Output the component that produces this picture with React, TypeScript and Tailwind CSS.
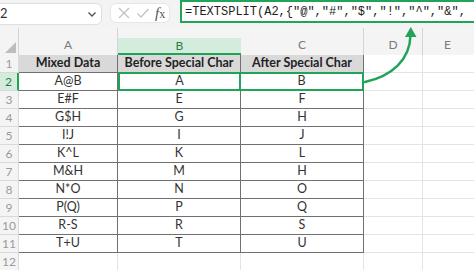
import React from "react";

const rows: [string, string, string][] = [
  ["A@B", "A", "B"],
  ["E#F", "E", "F"],
  ["G$H", "G", "H"],
  ["I!J", "I", "J"],
  ["K^L", "K", "L"],
  ["M&H", "M", "H"],
  ["N*O", "N", "O"],
  ["P(Q)", "P", "Q"],
  ["R-S", "R", "S"],
  ["T+U", "T", "U"],
];

const G = "#21a35a";
const FORMULA = '=TEXTSPLIT(A2,{"@","#","$","!","^","&",';

export default function App() {
  return (
    <div
      className="relative w-[474px] h-[270px] overflow-hidden bg-white"
      style={{ fontFamily: "Lato, 'Liberation Sans', sans-serif" }}
    >
      {/* toolbar */}
      <div className="flex h-[28px] items-start bg-[#f3f3f3]">
        <div className="ml-[-6px] mt-[3px] flex h-[22px] w-[108px] items-center justify-between rounded-md border border-[#dedede] bg-white pl-[5px] pr-[4px] text-[13px] text-[#333]">
          <span>2</span>
          <svg width="10" height="8" viewBox="0 0 10 8">
            <path d="M1.5 2.5 L5 6 L8.5 2.5" fill="none" stroke="#555" strokeWidth="1.4" />
          </svg>
        </div>
        <div className="ml-[8px] mt-[3px] flex h-[20px] w-[60px] items-center rounded-md border border-[#e6e6e6] bg-white pl-[6px]">
          <svg width="14" height="14" viewBox="0 0 14 14">
            <path d="M2 2 L12 12 M12 2 L2 12" stroke="#c4c4c4" strokeWidth="1.4" />
          </svg>
          <svg className="ml-[5px]" width="14" height="14" viewBox="0 0 14 14">
            <path d="M1.5 7.5 L5 11 L12.5 3" fill="none" stroke="#c4c4c4" strokeWidth="1.4" />
          </svg>
          <span
            className="ml-[5px] text-[15px] leading-none text-[#555]"
            style={{ fontFamily: "'Liberation Serif', serif" }}
          >
            <span className="italic">f</span>
            <span className="text-[12px]">x</span>
          </span>
        </div>
        <div
          className="ml-[10px] mr-[-10px] flex h-[23px] flex-1 items-center overflow-hidden whitespace-nowrap border-2 border-[#21a35a] bg-white pl-[3px] text-[12px] text-[#222]"
          style={{ fontFamily: "'Liberation Mono', monospace" }}
        >
          {FORMULA}
        </div>
      </div>

      {/* column headers */}
      <div className="grid h-[27px] grid-cols-[19px_99px_123px_123px_59px_1fr] bg-[#f4f4f4] text-[12px] text-[#7a7a7a]">
        <div className="relative border-r border-[#d4d4d4]">
          <svg className="absolute bottom-[2px] right-[2px]" width="11" height="11" viewBox="0 0 11 11">
            <path d="M11 0 L11 11 L0 11 Z" fill="#bdbdbd" />
          </svg>
        </div>
        <div className="flex items-end justify-center border-r border-[#d4d4d4] pb-[1px]">A</div>
        <div className="flex flex-col justify-end">
          <div className="flex h-[17px] items-center justify-center border-b-2 border-[#21a35a] bg-[#d4ecdc] text-[#2a7a4d]">
            B
          </div>
        </div>
        <div className="flex items-end justify-center border-r border-[#d4d4d4] pb-[1px]">C</div>
        <div className="flex items-end justify-center border-r border-[#d4d4d4] pb-[1px]">D</div>
        <div className="flex items-end justify-center pb-[1px] pr-[2px]">E</div>
      </div>

      {/* data grid */}
      <div className="grid grid-cols-[19px_99px_123px_123px_59px_1fr] auto-rows-[18px] text-[12.5px] text-[#333]">
        {/* row 1 */}
        <div className="flex items-center justify-center border-r border-b border-[#d9d9d9] bg-[#f4f4f4] text-[12px] text-[#9a9a9a]">
          1
        </div>
        <div className="flex items-center justify-center border-r border-b border-[#707070] bg-[#d9d9d9] font-bold text-[#222]">
          Mixed Data
        </div>
        <div className="flex items-center justify-center border-r border-b border-[#707070] bg-[#d9d9d9] font-bold text-[#222]">
          Before Special Char
        </div>
        <div className="flex items-center justify-center border-r border-b border-[#707070] bg-[#d9d9d9] font-bold text-[#222]">
          After Special Char
        </div>
        <div className="border-r border-b border-[#e4e4e4]" />
        <div className="border-b border-[#e4e4e4]" />

        {rows.map((r, i) => {
          const n = i + 2;
          const sel = n === 2;
          return (
            <React.Fragment key={n}>
              <div
                className={
                  sel
                    ? "flex items-center justify-center border-r-2 border-b border-r-[#21a35a] border-b-[#d9d9d9] bg-[#d4ecdc] text-[12px] text-[#2a7a4d]"
                    : "flex items-center justify-center border-r border-b border-[#d9d9d9] bg-[#f4f4f4] text-[12px] text-[#9a9a9a]"
                }
              >
                {n}
              </div>
              <div className="flex items-center justify-center border-r border-b border-[#707070]">{r[0]}</div>
              <div
                className={
                  sel
                    ? "relative -mt-px flex h-[19px] items-center justify-center border-2 border-[#21a35a]"
                    : "flex items-center justify-center border-r border-b border-[#707070]"
                }
              >
                {r[1]}
              </div>
              <div
                className={
                  sel
                    ? "relative -mt-px -ml-[2px] flex h-[19px] items-center justify-center border-2 border-[#21a35a]"
                    : "flex items-center justify-center border-r border-b border-[#707070]"
                }
              >
                {r[2]}
              </div>
              <div className="border-r border-b border-[#e4e4e4]" />
              <div className="border-b border-[#e4e4e4]" />
            </React.Fragment>
          );
        })}

        {/* row 12 */}
        <div className="flex items-center justify-center border-r border-[#d9d9d9] bg-[#f4f4f4] text-[12px] text-[#9a9a9a]">
          12
        </div>
        <div className="border-r border-[#e4e4e4]" />
        <div className="border-r border-[#e4e4e4]" />
        <div className="border-r border-[#e4e4e4]" />
        <div className="border-r border-[#e4e4e4]" />
        <div />
      </div>

      {/* arrow */}
      <svg className="pointer-events-none absolute left-0 top-0" width="474" height="270" viewBox="0 0 474 270">
        <path d="M365 82 C 392 76, 410 60, 410.5 35" fill="none" stroke={G} strokeWidth="2.5" strokeLinecap="round" />
        <path d="M410.8 27 L405 37 L416.5 37 Z" fill={G} />
      </svg>
    </div>
  );
}
